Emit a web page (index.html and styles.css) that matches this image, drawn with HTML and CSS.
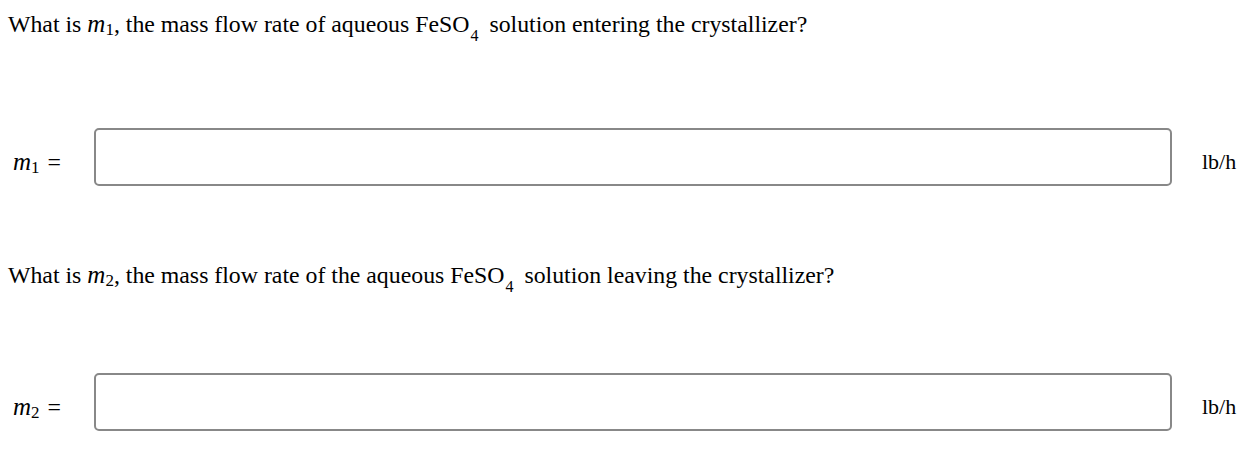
FILE: index.html
```html
<!DOCTYPE html>
<html>
<head>
<meta charset="utf-8">
<link rel="stylesheet" href="styles.css">
</head>
<body>
<div class="page">
  <section class="question q1">
    <p class="prompt">What is <span class="math"><i>m</i><sub>1</sub></span>, the mass flow rate of aqueous FeSO<sub class="chem">4</sub> solution entering the crystallizer?</p>
    <div class="answer-row">
      <label class="label"><span class="math"><i>m</i><sub>1</sub></span> <span class="eq">=</span></label>
      <div class="field"></div>
      <span class="unit">lb/h</span>
    </div>
  </section>
  <section class="question q2">
    <p class="prompt">What is <span class="math"><i>m</i><sub>2</sub></span>, the mass flow rate of the aqueous FeSO<sub class="chem">4</sub> solution leaving the crystallizer?</p>
    <div class="answer-row">
      <label class="label"><span class="math"><i>m</i><sub>2</sub></span> <span class="eq">=</span></label>
      <div class="field"></div>
      <span class="unit">lb/h</span>
    </div>
  </section>
</div>
</body>
</html>
```
FILE: styles.css
```css
html, body {
  margin: 0;
  padding: 0;
  background: #ffffff;
}
body {
  font-family: "Liberation Serif", "Times New Roman", serif;
  font-size: 23.8px;
  color: #000;
}
.page {
  padding: 10px 0 0 8px;
}
.question {
  margin: 0;
}
.prompt {
  margin: 0;
  line-height: 28px;
}
.math i {
  font-style: italic;
  font-size: 25px;
}
.math sub {
  font-size: 17px;
  vertical-align: -3px;
  line-height: 0;
}
sub.chem {
  font-size: 16px;
  vertical-align: -9px;
  line-height: 0;
  margin-left: 1px;
  margin-right: 5px;
}
.answer-row {
  display: flex;
  align-items: center;
}
.q1 .answer-row {
  margin-top: 90px;
}
.q2 {
  margin-top: 75px;
}
.q2 .answer-row {
  margin-top: 84px;
}
.label {
  width: 86px;
  padding-left: 5px;
  box-sizing: border-box;
  margin-top: 10px;
  white-space: nowrap;
}
.eq {
  margin-left: 2px;
}
.field {
  flex: 1;
  height: 58px;
  box-sizing: border-box;
  border: 2px solid #888888;
  border-radius: 5px;
  background: #fff;
}
.unit {
  width: 80px;
  padding-left: 30px;
  margin-top: 10px;
  box-sizing: border-box;
  font-size: 22px;
}
```
